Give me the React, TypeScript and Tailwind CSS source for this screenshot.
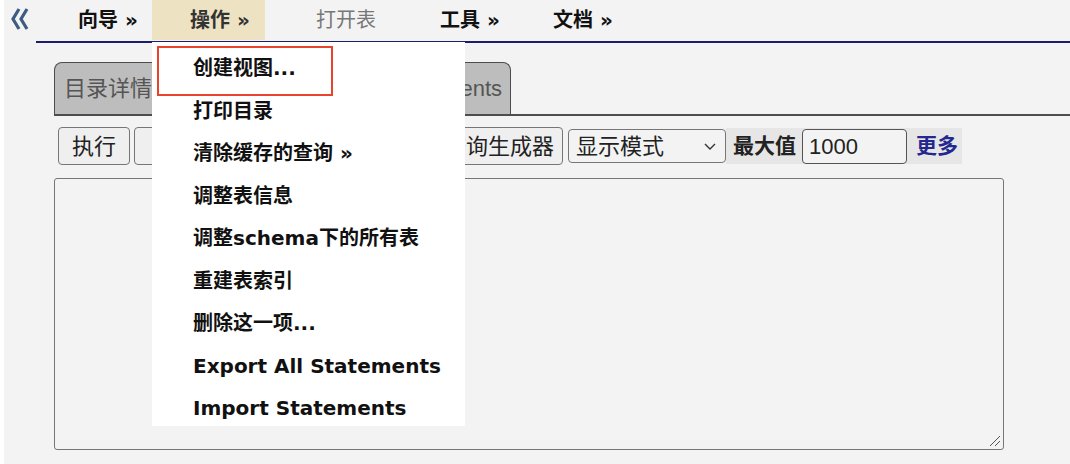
import React from "react";

const MENU_FONT = { fontFamily: '"DejaVu Sans", "Noto Sans CJK SC", sans-serif' };
const UI_FONT = { fontFamily: '"Liberation Sans", "Noto Sans CJK SC", Arial, sans-serif' };

const DROPDOWN = [
  "创建视图...",
  "打印目录",
  "清除缓存的查询 »",
  "调整表信息",
  "调整schema下的所有表",
  "重建表索引",
  "删除这一项...",
  "Export All Statements",
  "Import Statements",
];

function Dropdown() {
  return (
    <div className="absolute left-0 top-[42px] z-10 h-[384px] w-[313px] overflow-hidden bg-white pt-[5px]">
      {DROPDOWN.map((item) => (
        <div
          key={item}
          className="flex h-[42.5px] items-center pl-[41px] text-[20px] font-bold text-[#111]"
        >
          {item}
        </div>
      ))}
      {/* red highlight around the first entry */}
      <div className="absolute left-[5px] top-[4px] h-[50px] w-[176px] border-[2.5px] border-[#e8432b]" />
    </div>
  );
}

function CollapseIcon() {
  return (
    <svg width="22" height="24" viewBox="0 0 22 24">
      <path d="M9 2 L3 12 L9 22" fill="none" stroke="#3d5c82" strokeWidth="3.2" strokeLinejoin="miter" />
      <path d="M17 2 L11 12 L17 22" fill="none" stroke="#3d5c82" strokeWidth="3.2" strokeLinejoin="miter" />
    </svg>
  );
}

function ResizeHandle() {
  return (
    <svg className="absolute bottom-[2px] right-[2px]" width="12" height="12" viewBox="0 0 12 12">
      <line x1="1" y1="11" x2="11" y2="1" stroke="#555" strokeWidth="1" />
      <line x1="6" y1="11" x2="11" y2="6" stroke="#555" strokeWidth="1" />
    </svg>
  );
}

export default function App() {
  return (
    <div className="relative h-[464px] w-[1070px] overflow-hidden border-l-4 border-white bg-[#f3f3f3]">
      {/* menu bar */}
      <div className="flex h-[41px] items-start text-[20px] font-bold text-[#111]" style={MENU_FONT}>
        <div className="flex h-[40px] w-[36px] items-center pl-[6px] pb-[2px]">
          <CollapseIcon />
        </div>
        <div className="flex h-[40px] w-[112px] items-center pl-[38px]">向导 »</div>
        <div className="relative flex h-[40px] w-[113px] items-center bg-[#ede3c3] pl-[38px] text-[#333]">
          操作 »
          <Dropdown />
        </div>
        <div className="flex h-[40px] w-[124px] items-center pl-[51px] font-normal text-[#777]">打开表</div>
        <div className="flex h-[40px] w-[113px] items-center pl-[51px]">工具 »</div>
        <div className="flex h-[40px] items-center pl-[51px]">文档 »</div>
      </div>
      <div className="ml-[32px] h-[2px] bg-[#1d1d6b]" />

      {/* tabs */}
      <div className="mt-[19px] ml-[50px] flex items-end gap-[4px] border-b-2 border-[#4d4d4d]" style={UI_FONT}>
        <div className="flex h-[52px] w-[176px] items-center rounded-t-[8px] border border-b-0 border-[#4d4d4d] bg-[#bdbdbd] px-[9px] text-[22px] text-[#555]">
          目录详情
        </div>
        <div className="flex h-[52px] w-[277px] items-center justify-end rounded-t-[8px] border border-b-0 border-[#4d4d4d] bg-[#bdbdbd] px-[8px] text-[22px] text-[#555]">
          Statements
        </div>
      </div>

      {/* toolbar */}
      <div className="mt-[11px] ml-[54px] flex items-center text-[22px] text-[#222]" style={UI_FONT}>
        <button className="h-[38px] w-[72px] rounded-[4px] border border-[#767676] bg-[#efefef]">执行</button>
        <button className="ml-[4px] h-[38px] w-[302px] rounded-[4px] border border-[#767676] bg-[#efefef]" />
        <button className="ml-[4px] h-[38px] w-[123px] rounded-[4px] border border-[#767676] bg-[#efefef] pr-[8px] text-right">
          查询生成器
        </button>
        <div className="ml-[5px] flex h-[34px] w-[158px] items-center justify-between rounded-[4px] border border-[#767676] bg-[#f3f3f3] pl-[7px] pr-[8px]">
          <span>显示模式</span>
          <svg width="14" height="14" viewBox="0 0 14 14">
            <path d="M2 5 L7 10 L12 5" fill="none" stroke="#333" strokeWidth="1.4" />
          </svg>
        </div>
        <div className="flex h-[36px] w-[236px] items-center bg-[#e6e6e6]">
          <span className="w-[76px] pl-[7px] text-[21px] font-bold">最大值</span>
          <div className="flex h-[35px] w-[105px] items-center rounded-[4px] border border-[#555] bg-[#f3f3f3] pl-[6px]">
            1000
          </div>
          <span className="ml-[9px] text-[21px] font-bold text-[#23288f]">更多</span>
        </div>
      </div>

      {/* query editor */}
      <div className="relative mt-[13px] ml-[50px] h-[272px] w-[950px] rounded-[3px] border border-[#767676] bg-[#f3f3f3]">
        <ResizeHandle />
      </div>
    </div>
  );
}
